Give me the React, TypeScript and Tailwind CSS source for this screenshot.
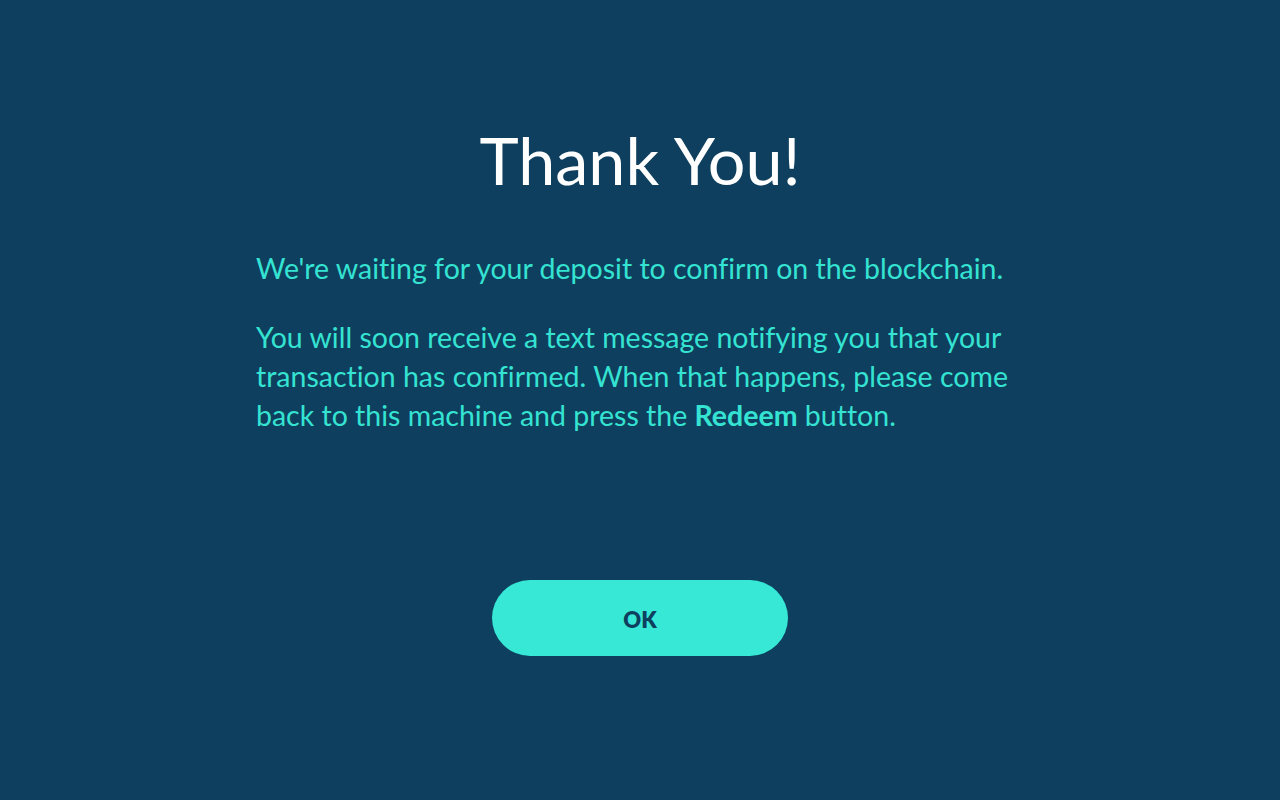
export default function App() {
  return (
    <div className="min-h-[800px] w-full bg-[#0e3f5e] flex flex-col items-center [font-variant-ligatures:none]" style={{ fontFamily: 'Lato, "Noto Sans", sans-serif' }}>
      <h1 className="mt-[117px] text-[66.5px] leading-[84px] text-white font-normal">Thank You!</h1>
      <div className="mt-[48px] w-[768px] text-[28.5px] leading-[39px] text-[#35e3d2]">
        <p>We're waiting for your deposit to confirm on the blockchain.</p>
        <p className="mt-[30px]">
          You will soon receive a text message notifying you that your transaction has confirmed. When that happens, please come back to this machine and press the <b className="font-bold">Redeem</b> button.
        </p>
      </div>
      <button className="mt-[145px] w-[296px] h-[76px] pt-[2px] rounded-full bg-[#37e8d7] text-[#0e3f5e] text-[22px] font-extrabold">OK</button>
    </div>
  );
}
